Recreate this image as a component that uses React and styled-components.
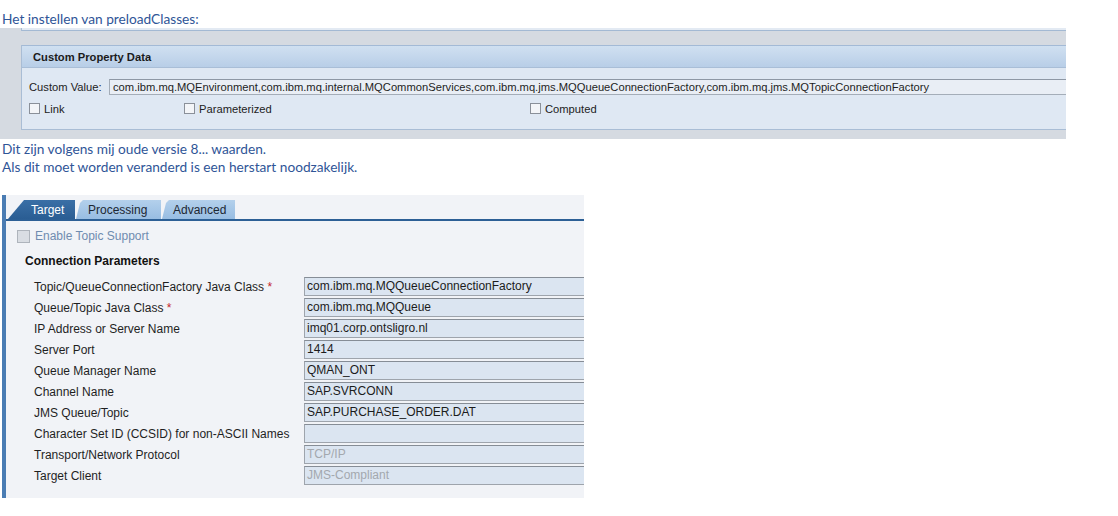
import React from "react";
import styled, { createGlobalStyle } from "styled-components";

const GlobalStyle = createGlobalStyle`
  html, body { margin: 0; padding: 0; background: #ffffff; }
  body { font-family: "Liberation Sans", Arial, sans-serif; }
`;

const Page = styled.div`
  display: flex;
  flex-direction: column;
  align-items: flex-start;
  padding-top: 10px;
`;

const Para = styled.p`
  margin: 0 0 0 2px;
  font-family: Lato, "Open Sans", sans-serif;
  font-size: 13.7px;
  line-height: 18px;
  color: #2f5597;
  white-space: nowrap;
`;

const NoteBlock = styled.div`
  margin-top: 1px;
  display: flex;
  flex-direction: column;
`;

/* ---------- Screenshot 1: custom property ---------- */
const Shot1 = styled.div`
  width: 1066px;
  height: 111px;
  background: #d5dae1;
  overflow: hidden;
  display: flex;
  flex-direction: column;
  font-size: 11.2px;
`;

const Stub = styled.div`
  margin-left: 21px;
  height: 2px;
  background: #e3eaf3;
  border-left: 1px solid #a9bdd5;
  border-bottom: 1px solid #a3b9d3;
`;

const PropPanel = styled.div`
  margin-top: 14px;
  margin-left: 21px;
  border-left: 1px solid #a9bdd5;
  display: flex;
  flex-direction: column;
`;

const PanelHeader = styled.div`
  height: 21px;
  border-top: 1px solid #a3bad6;
  border-bottom: 1px solid #a9bed7;
  background: linear-gradient(#d0e0f1, #b8cee7);
  padding-left: 11px;
  display: flex;
  align-items: center;
  font-weight: bold;
  color: #1b1b1b;
`;

const PanelBody = styled.div`
  height: 50px;
  padding: 11px 0 0 7px;
  background: #dfe8f3;
  border-bottom: 1px solid #a9bdd5;
  display: flex;
  flex-direction: column;
  gap: 7px;
`;

const ValueRow = styled.div`
  display: flex;
  align-items: center;
  height: 16px;
  color: #222;
`;

const ValueLabel = styled.span`
  width: 80px;
  flex: none;
`;

const ValueInput = styled.div`
  flex: none;
  width: 1000px;
  height: 14px;
  line-height: 14px;
  padding-left: 3px;
  background: #e9eef5;
  border: 1px solid #a4adb8;
  border-top-color: #8e98a5;
  white-space: nowrap;
  overflow: hidden;
  color: #1e1e1e;
`;

const CheckRow = styled.div`
  display: grid;
  grid-template-columns: 155px 346px auto;
  color: #222;
`;

const CheckItem = styled.label`
  display: flex;
  align-items: center;
  gap: 4px;
  height: 13px;
  color: ${(p) => (p.$muted ? "#6f8cb0" : "#222")};
`;

const Box = styled.span`
  display: inline-block;
  flex: none;
  width: ${(p) => p.$size}px;
  height: ${(p) => p.$size}px;
  box-sizing: border-box;
  border: 1px solid ${(p) => (p.$muted ? "#aeb4bc" : "#8a9099")};
  background: ${(p) => (p.$muted ? "#d9dde3" : "#f3f5f8")};
`;

/* ---------- Screenshot 2: connection parameters ---------- */
const Shot2 = styled.div`
  margin-top: 19px;
  margin-left: 2px;
  width: 578px;
  height: 303px;
  background: #f1f3f7;
  border-left: 4px solid #4a7cb3;
  overflow: hidden;
  display: flex;
  flex-direction: column;
  font-size: 12px;
`;

const TabBar = styled.div`
  height: 20px;
  padding-top: 4px;
  padding-left: 2px;
  border-bottom: 2px solid #2c5f95;
  display: flex;
  align-items: flex-end;
  gap: 1px;
`;

const Tab = styled.div`
  height: 19px;
  box-sizing: border-box;
  width: ${(p) => p.$w}px;
  padding-left: ${(p) => p.$pl}px;
  display: flex;
  align-items: center;
  color: ${(p) => (p.$active ? "#ffffff" : "#1d2733")};
  background: ${(p) =>
    p.$active
      ? "linear-gradient(#3a6fa6, #2a5d93)"
      : "linear-gradient(#b3d0ec, #98bde2)"};
  clip-path: ${(p) =>
    p.$active
      ? "polygon(0 100%, 16px 0, 100% 0, 100% 100%)"
      : "polygon(0 100%, 4px 3px, 7px 0, 100% 0, 100% 100%)"};
`;

const FormBody = styled.div`
  display: flex;
  flex-direction: column;
  padding-top: 8px;
`;

const EnableRow = styled(CheckItem)`
  margin-left: 11px;
  height: 14px;
  gap: 5px;
`;

const SectionTitle = styled.div`
  margin: 10px 0 0 19px;
  height: 16px;
  line-height: 16px;
  font-weight: bold;
  color: #111;
`;

const Rows = styled.div`
  margin-top: 8px;
  display: flex;
  flex-direction: column;
  gap: 2px;
`;

const Row = styled.div`
  display: grid;
  grid-template-columns: 270px 300px;
  padding-left: 28px;
  height: 19px;
  align-items: center;
  color: #1f1f1f;
`;

const Req = styled.span`
  color: #c4262e;
`;

const Field = styled.div`
  height: 17px;
  line-height: 17px;
  padding-left: 2px;
  background: #dbe5f1;
  border: 1px solid #9ea4ac;
  border-top-color: #868d96;
  color: ${(p) => (p.$disabled ? "#a3a8ae" : "#1c1c1c")};
  white-space: nowrap;
  overflow: hidden;
`;

const customValue =
  "com.ibm.mq.MQEnvironment,com.ibm.mq.internal.MQCommonServices,com.ibm.mq.jms.MQQueueConnectionFactory,com.ibm.mq.jms.MQTopicConnectionFactory";

const params = [
  { label: "Topic/QueueConnectionFactory Java Class", req: true, value: "com.ibm.mq.MQQueueConnectionFactory" },
  { label: "Queue/Topic Java Class", req: true, value: "com.ibm.mq.MQQueue" },
  { label: "IP Address or Server Name", value: "imq01.corp.ontsligro.nl" },
  { label: "Server Port", value: "1414" },
  { label: "Queue Manager Name", value: "QMAN_ONT" },
  { label: "Channel Name", value: "SAP.SVRCONN" },
  { label: "JMS Queue/Topic", value: "SAP.PURCHASE_ORDER.DAT" },
  { label: "Character Set ID (CCSID) for non-ASCII Names", value: "" },
  { label: "Transport/Network Protocol", value: "TCP/IP", disabled: true },
  { label: "Target Client", value: "JMS-Compliant", disabled: true },
];

const tabs = [
  { name: "Target", active: true, w: 67, pl: 23 },
  { name: "Processing", w: 85, pl: 12 },
  { name: "Advanced", w: 73, pl: 11 },
];

export default function App() {
  return (
    <>
      <GlobalStyle />
      <Page>
        <Para>Het instellen van preloadClasses:</Para>
        <Shot1>
          <Stub />
          <PropPanel>
            <PanelHeader>Custom Property Data</PanelHeader>
            <PanelBody>
              <ValueRow>
                <ValueLabel>Custom Value:</ValueLabel>
                <ValueInput>{customValue}</ValueInput>
              </ValueRow>
              <CheckRow>
                <CheckItem>
                  <Box $size={11} />
                  Link
                </CheckItem>
                <CheckItem>
                  <Box $size={11} />
                  Parameterized
                </CheckItem>
                <CheckItem>
                  <Box $size={11} />
                  Computed
                </CheckItem>
              </CheckRow>
            </PanelBody>
          </PropPanel>
        </Shot1>
        <NoteBlock>
          <Para>Dit zijn volgens mij oude versie 8... waarden.</Para>
          <Para>Als dit moet worden veranderd is een herstart noodzakelijk.</Para>
        </NoteBlock>
        <Shot2>
          <TabBar>
            {tabs.map((t) => (
              <Tab key={t.name} $active={t.active} $w={t.w} $pl={t.pl}>
                {t.name}
              </Tab>
            ))}
          </TabBar>
          <FormBody>
            <EnableRow $muted>
              <Box $size={13} $muted />
              Enable Topic Support
            </EnableRow>
            <SectionTitle>Connection Parameters</SectionTitle>
            <Rows>
              {params.map((p) => (
                <Row key={p.label}>
                  <span>
                    {p.label}
                    {p.req && <Req> *</Req>}
                  </span>
                  <Field $disabled={p.disabled}>{p.value || "\u00a0"}</Field>
                </Row>
              ))}
            </Rows>
          </FormBody>
        </Shot2>
      </Page>
    </>
  );
}
